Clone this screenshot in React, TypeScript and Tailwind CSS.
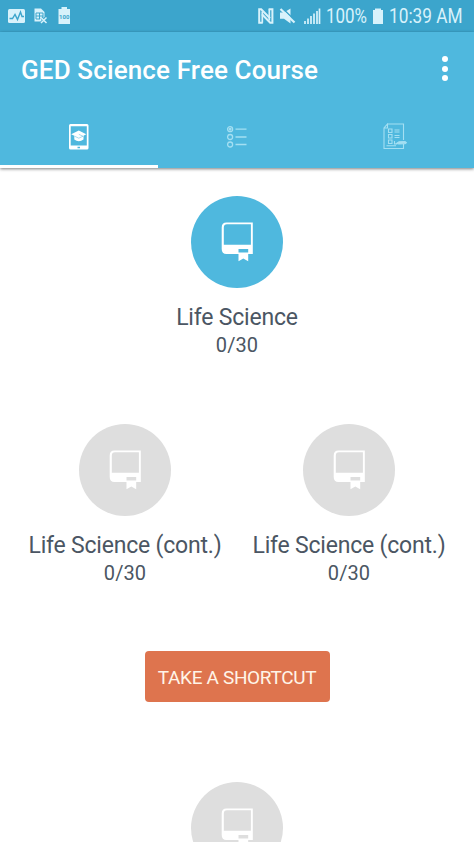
import React from "react";

function BookIcon() {
  return (
    <svg width="92" height="92" viewBox="0 0 92 92" fill="currentColor">
      <path
        fillRule="evenodd"
        d="M35.5 26.5H61.8V58H57.2V65.3L52.3 62.6L47.5 65.3V58H35.5Q30.7 58 30.7 53V31.5Q30.7 26.5 35.5 26.5ZM36 28.3Q32.8 28.3 32.8 31.7V48.7H59.9V28.3ZM47.5 53V56.4H57.2V53Z"
      />
    </svg>
  );
}

function Lesson({ title, active = false }: { title?: string; active?: boolean }) {
  return (
    <div className="flex w-[224px] shrink-0 flex-col items-center text-[#4b5663]">
      <div className={`h-[92px] w-[92px] rounded-full text-white ${active ? "bg-[#4fb8de]" : "bg-[#dedede]"}`}>
        <BookIcon />
      </div>
      {title && (
        <>
          <div className="mt-[15px] whitespace-nowrap text-[23px] leading-[30px] tracking-[-0.2px]">{title}</div>
          <div className="mb-[2px] text-[20px] leading-[24px] tracking-[0.1px]">0/30</div>
        </>
      )}
    </div>
  );
}

function StatusBar() {
  return (
    <div className="flex h-8 items-center bg-[#3ca5cc] text-[#d8f2fb]">
      <svg width="80" height="32" viewBox="0 0 80 32" fill="none">
        <rect x="8" y="9" width="17" height="14" rx="1.5" fill="currentColor" />
        <path d="M9.5 18.5H12.5L15 14.5L17.5 19.5L20.5 12L22 16.5H24" stroke="#3ca5cc" strokeWidth="1.4" />
        <path d="M34.5 8.5H41L44.5 12V17L41 21.5H34.5Z" fill="currentColor" />
        <path d="M36 13H43M36 16H43M36 19H40M36 13V19M39.5 13V19M43 13V17" stroke="#3ca5cc" />
        <path d="M41.5 17.5L46.5 22.5M46.5 17.5L41.5 22.5" stroke="#3ca5cc" strokeWidth="3" />
        <path d="M41 17.5L46.5 23M46.5 17.5L41 23" stroke="currentColor" strokeWidth="1.5" />
        <path d="M58.5 9H61.5V7H67V9H70V24H58.5Z" fill="currentColor" />
        <text x="64.2" y="18.8" textAnchor="middle" fontSize="6" fontWeight="700" fill="#3ca5cc" fontFamily="Roboto">100</text>
      </svg>
      <svg className="ml-[176px]" width="67" height="32" viewBox="256 0 67 32" fill="none">
        <path d="M262.8 22.8H259.2V9.2H261.2L270 18.3M268.6 9.2H272.4V22.8H270.2L262 14.2" stroke="currentColor" strokeWidth="2" />
        <path d="M262.3 11.5V22.8M269.3 9.2V20.5" stroke="currentColor" strokeWidth="1.7" />
        <path d="M280 12.5H284L290.5 8.5V23.5L284 18.8H280Z" fill="currentColor" />
        <path d="M282.2 8L296 21.5" stroke="#3ca5cc" strokeWidth="1.6" />
        <path d="M280.5 9L294.5 22.5" stroke="currentColor" strokeWidth="2.2" />
        <path d="M305 24V21M308 24V18.5M311 24V16M314 24V13.5M317 24V11M319.5 24V8.5" stroke="currentColor" strokeWidth="1.7" />
      </svg>
      <span className="ml-[3px] w-[45px] origin-left scale-x-[0.87] whitespace-nowrap pt-[2px] text-[19.5px] leading-8">100%</span>
      <svg width="14" height="32" viewBox="371 0 14 32" fill="currentColor">
        <path d="M375 10V8.5H381V10H383V24H373V10Z" />
      </svg>
      <span className="ml-[4px] w-[80px] origin-left scale-x-[0.885] whitespace-nowrap pt-[2px] text-[19.5px] leading-8">10:39 AM</span>
    </div>
  );
}

function Tabs() {
  return (
    <div className="grid h-[60px] grid-cols-3 text-white">
      <div className="flex justify-center border-b-[3px] border-white pt-[16px]">
        <svg width="20" height="27" viewBox="0 0 20 27">
          <path fillRule="evenodd" fill="currentColor" d="M1.5 0H18Q19.5 0 19.5 1.5V24Q19.5 25.5 18 25.5H1.5Q0 25.5 0 24V1.5Q0 0 1.5 0ZM1.7 2.2V21.5H17.8V2.2ZM8.5 22.8V24.2H11V22.8Z" />
          <path fill="currentColor" d="M9.8 6.5L17.3 10.2L14.5 11.7V15.5Q9.8 19 5.3 15.5V11.7L2.2 10.2Z" />
          <path d="M9.8 10.3L14 12.3M5.5 12.2L9.8 14.2L14 12.2" fill="none" stroke="#4fb8de" strokeWidth=".5" />
        </svg>
      </div>
      <div className="flex justify-center pt-[18px] text-[#a4dff2]">
        <svg width="20" height="22" viewBox="0 0 20 22" fill="none" stroke="currentColor" strokeWidth="1.3">
          <circle cx="3.1" cy="3.2" r="2.5" /><circle cx="3.1" cy="3.2" r=".8" fill="currentColor" />
          <circle cx="3.1" cy="11" r="2.5" /><circle cx="3.1" cy="18.5" r="2.5" />
          <path d="M8.5 3.2H19.5M8.5 11H19.5M8.5 18.5H19.5" />
        </svg>
      </div>
      <div className="flex justify-center pt-[15px] text-[#a4dff2]">
        <svg width="24" height="28" viewBox="0 0 24 28" fill="none" stroke="currentColor" strokeWidth="1.1">
          <path d="M4.5 1H20.5V17M20.5 21V25.5H1V5L4.5 1V5H1" />
          <path d="M5.5 6H9V9.5H5.5ZM5.5 11.5H9V15H5.5ZM5.5 17H9V20.5H5.5ZM3.5 22.8H13M11.5 7H16.5M11.5 9H16.5M11.5 12.5H16.5M11.5 14.5H16.5M11.5 18V21H14" />
          <path d="M13.5 20.5L16 18.7L22 18.5L23.5 19.7L22 20.7L16 21Z" fill="currentColor" />
        </svg>
      </div>
    </div>
  );
}

export default function App() {
  return (
    <div className="flex h-[842px] w-[474px] flex-col overflow-hidden bg-white font-['Roboto',sans-serif]">
      <StatusBar />
      <header className="relative shrink-0 bg-[#4fb8de] shadow-[0_1px_3px_rgba(0,0,0,0.5)]">
        <div className="flex h-[76px] items-center justify-between pr-[26px] pl-[21px]">
          <h1 className="whitespace-nowrap text-[26px] leading-8 font-medium tracking-[0.13px] text-white">GED Science Free Course</h1>
          <div className="flex flex-col gap-[3.4px] pb-[3px]">
            <i className="h-[6px] w-[6px] rounded-full bg-white" />
            <i className="h-[6px] w-[6px] rounded-full bg-white" />
            <i className="h-[6px] w-[6px] rounded-full bg-white" />
          </div>
        </div>
        <Tabs />
      </header>
      <main className="flex flex-col items-center pt-[28px]">
        <Lesson title="Life Science" active />
        <div className="mt-[65px] flex">
          <Lesson title="Life Science (cont.)" />
          <Lesson title="Life Science (cont.)" />
        </div>
        <button className="mt-[64px] h-[51px] w-[185px] shrink-0 rounded-[4px] bg-[#de744e] pt-[3px] text-[19px] tracking-[-0.33px] whitespace-nowrap text-[#fff4e8]">
          TAKE A SHORTCUT
        </button>
        <div className="mt-[80px]">
          <Lesson />
        </div>
      </main>
    </div>
  );
}
